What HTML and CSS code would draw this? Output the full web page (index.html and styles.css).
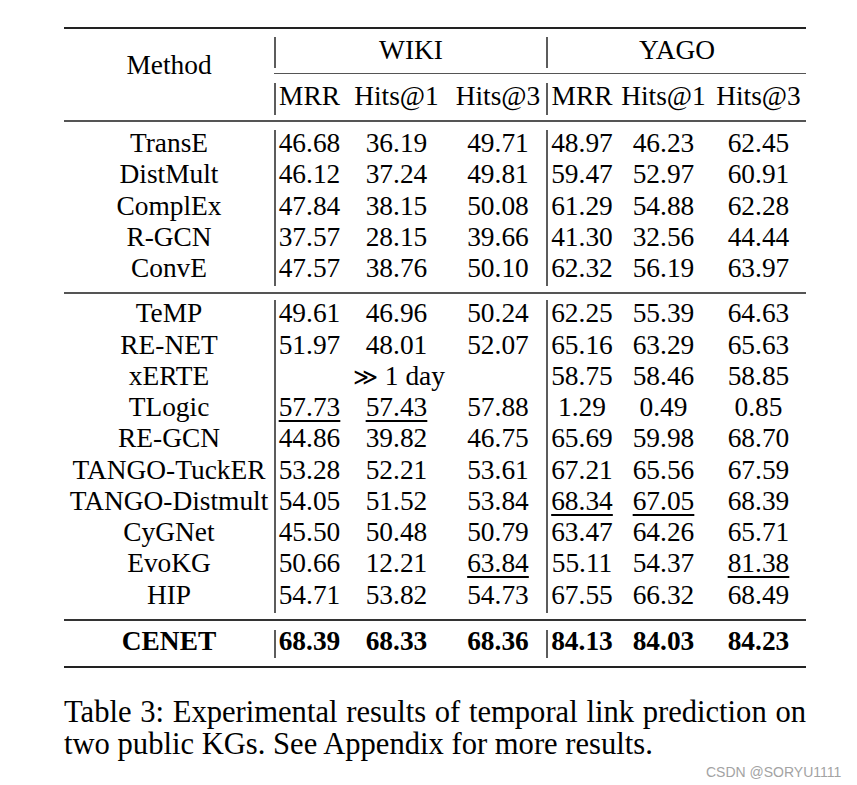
FILE: index.html
```html
<!DOCTYPE html>
<html>
<head>
<meta charset="utf-8">
<link rel="stylesheet" href="styles.css">
</head>
<body>
<div class="page">
  <div class="tbl">
    <div class="head">
      <div class="h-method">Method</div>
      <div class="h-group h-wiki bar">WIKI</div>
      <div class="h-group h-yago bar">YAGO</div>
      <div class="cmid"></div>
      <div class="h-sub bar">MRR</div>
      <div class="h-sub">Hits@1</div>
      <div class="h-sub">Hits@3</div>
      <div class="h-sub bar">MRR</div>
      <div class="h-sub">Hits@1</div>
      <div class="h-sub">Hits@3</div>
    </div>

    <div class="block b1">
      <div class="row"><div>TransE</div><div class="bar">46.68</div><div>36.19</div><div>49.71</div><div class="bar">48.97</div><div>46.23</div><div>62.45</div></div>
      <div class="row"><div>DistMult</div><div class="bar">46.12</div><div>37.24</div><div>49.81</div><div class="bar">59.47</div><div>52.97</div><div>60.91</div></div>
      <div class="row"><div>ComplEx</div><div class="bar">47.84</div><div>38.15</div><div>50.08</div><div class="bar">61.29</div><div>54.88</div><div>62.28</div></div>
      <div class="row"><div>R-GCN</div><div class="bar">37.57</div><div>28.15</div><div>39.66</div><div class="bar">41.30</div><div>32.56</div><div>44.44</div></div>
      <div class="row"><div>ConvE</div><div class="bar">47.57</div><div>38.76</div><div>50.10</div><div class="bar">62.32</div><div>56.19</div><div>63.97</div></div>
    </div>

    <div class="block b2">
      <div class="row"><div>TeMP</div><div class="bar">49.61</div><div>46.96</div><div>50.24</div><div class="bar">62.25</div><div>55.39</div><div>64.63</div></div>
      <div class="row"><div>RE-NET</div><div class="bar">51.97</div><div>48.01</div><div>52.07</div><div class="bar">65.16</div><div>63.29</div><div>65.63</div></div>
      <div class="row"><div>xERTE</div><div class="bar span3 day"><span class="gg">&#8811;</span> 1 day</div><div class="bar">58.75</div><div>58.46</div><div>58.85</div></div>
      <div class="row"><div>TLogic</div><div class="bar"><span class="ul">57.73</span></div><div><span class="ul">57.43</span></div><div>57.88</div><div class="bar">1.29</div><div>0.49</div><div>0.85</div></div>
      <div class="row"><div>RE-GCN</div><div class="bar">44.86</div><div>39.82</div><div>46.75</div><div class="bar">65.69</div><div>59.98</div><div>68.70</div></div>
      <div class="row"><div>TANGO-TuckER</div><div class="bar">53.28</div><div>52.21</div><div>53.61</div><div class="bar">67.21</div><div>65.56</div><div>67.59</div></div>
      <div class="row"><div>TANGO-Distmult</div><div class="bar">54.05</div><div>51.52</div><div>53.84</div><div class="bar"><span class="ul">68.34</span></div><div><span class="ul">67.05</span></div><div>68.39</div></div>
      <div class="row"><div>CyGNet</div><div class="bar">45.50</div><div>50.48</div><div>50.79</div><div class="bar">63.47</div><div>64.26</div><div>65.71</div></div>
      <div class="row"><div>EvoKG</div><div class="bar">50.66</div><div>12.21</div><div><span class="ul">63.84</span></div><div class="bar">55.11</div><div>54.37</div><div><span class="ul">81.38</span></div></div>
      <div class="row"><div>HIP</div><div class="bar">54.71</div><div>53.82</div><div>54.73</div><div class="bar">67.55</div><div>66.32</div><div>68.49</div></div>
    </div>

    <div class="block b3">
      <div class="row bold"><div>CENET</div><div class="bar">68.39</div><div>68.33</div><div>68.36</div><div class="bar">84.13</div><div>84.03</div><div>84.23</div></div>
    </div>
  </div>

  <div class="caption">
    <div class="cap-line1">Table 3: Experimental results of temporal link prediction on</div>
    <div class="cap-line2">two public KGs. See Appendix for more results.</div>
  </div>

  <div class="watermark">CSDN @SORYU1111</div>
</div>
</body>
</html>
```

FILE: styles.css
```css
html, body {
  margin: 0;
  padding: 0;
  background: #ffffff;
}

.page {
  position: relative;
  width: 857px;
  height: 785px;
  overflow: hidden;
  font-family: "Liberation Serif", "DejaVu Serif", serif;
  color: #000;
  padding-top: 27px;
  box-sizing: border-box;
}

.tbl {
  margin-left: 64px;
  width: 742px;
  border-top: 2px solid #222;
  border-bottom: 2px solid #222;
  font-size: 27.4px;
}

.head,
.row {
  display: grid;
  grid-template-columns: 210px 69px 107px 96px 70px 95px 95px;
}

.bar {
  border-left: 2px solid #5c5c5c;
}

/* header */
.head {
  grid-template-rows: 44px 1px 46px;
  border-bottom: 2px solid #555;
}

.h-method {
  grid-row: 1 / 4;
  grid-column: 1;
  text-align: center;
  line-height: 25px;
  padding-top: 24px;
}

.h-group {
  grid-row: 1;
  margin-top: 8px;
  height: 31px;
  line-height: 27px;
  text-align: center;
}

.h-wiki { grid-column: 2 / 5; }
.h-yago { grid-column: 5 / 8; }

.cmid {
  grid-row: 2;
  grid-column: 2 / 8;
  background: #555;
}

.h-sub {
  grid-row: 3;
  margin-top: 9px;
  height: 32px;
  line-height: 27px;
  text-align: center;
  white-space: nowrap;
}

/* body blocks */
.block {
  border-bottom: 2px solid #555;
}

.b1 { padding: 8px 0 6px; }
.b2 { padding: 6px 0 6px; border-bottom-color: #333; }
.b3 { padding: 9px 0 8px; border-bottom: none; }

.row {
  height: 31.25px;
  line-height: 26px;
}

.row > div {
  text-align: center;
  white-space: nowrap;
}

.span3 {
  grid-column: 2 / 5;
}

.day {
  padding-right: 24px;
}

.gg {
  font-family: "DejaVu Serif", serif;
  font-weight: normal;
  font-size: 24px;
}

.ul {
  text-decoration: underline;
  text-decoration-thickness: 1.5px;
  text-underline-offset: 4px;
}

.bold {
  font-weight: bold;
  height: 28px;
  line-height: 22px;
}

/* caption */
.caption {
  margin: 28px 0 0 64px;
  width: 742px;
  font-size: 30.6px;
  line-height: 32px;
}

.cap-line1 {
  text-align: justify;
  text-align-last: justify;
  white-space: nowrap;
}

.cap-line2 {
  white-space: nowrap;
}

.watermark {
  position: absolute;
  left: 706px;
  top: 764px;
  font-family: "Liberation Sans", "DejaVu Sans", sans-serif;
  font-size: 14px;
  color: #a3a3a3;
  line-height: 16px;
}
```
